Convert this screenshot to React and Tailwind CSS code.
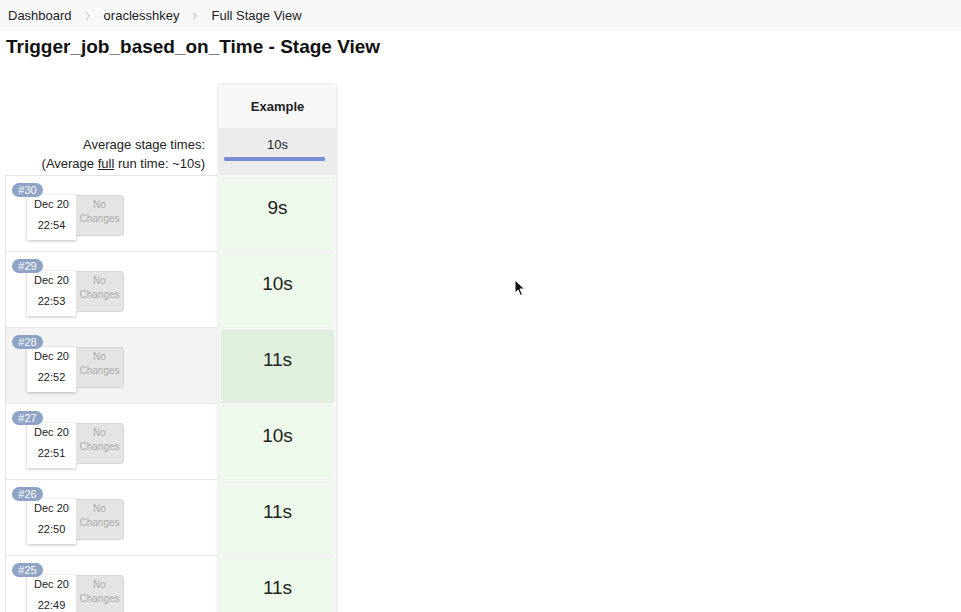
import React from "react";
import { ChevronRight } from "lucide-react";

const BUILDS = [
  { id: 30, date: "Dec 20", time: "22:54", secs: "9s" },
  { id: 29, date: "Dec 20", time: "22:53", secs: "10s" },
  { id: 28, date: "Dec 20", time: "22:52", secs: "11s", hover: true },
  { id: 27, date: "Dec 20", time: "22:51", secs: "10s" },
  { id: 26, date: "Dec 20", time: "22:50", secs: "11s" },
  { id: 25, date: "Dec 20", time: "22:49", secs: "11s" },
];

function Crumbs() {
  return (
    <div className="h-[31px] bg-[#f8f8f9] flex items-center pl-[8px] text-[13px] text-[#222]">
      <span>Dashboard</span>
      <ChevronRight size={12} className="mx-[10px] text-[#aaa]" />
      <span>oraclesshkey</span>
      <ChevronRight size={12} className="mx-[10px] text-[#aaa]" />
      <span>Full Stage View</span>
    </div>
  );
}

function BuildCell({ b }) {
  return (
    <div
      className={`h-[76px] border-t border-l border-[#e6e6e6] pl-[6px] pt-[7px] ${
        b.hover ? "bg-[#f3f3f3]" : "bg-white"
      }`}
    >
      <div className="relative z-10 w-[31px] h-[14px] rounded-full bg-[#8fa3c6] text-white text-[11px] leading-[14px] text-center">
        #{b.id}
      </div>
      <div className="flex -mt-[2px] ml-[15px]">
        <div className="w-[49px] h-[45px] bg-white shadow-[0_1px_3px_rgba(0,0,0,0.25)] flex flex-col items-center text-[11px] text-[#222] leading-[14px] pt-[2px] gap-[7px]">
          <span>{b.date}</span>
          <span>{b.time}</span>
        </div>
        <div className="w-[48px] h-[41px] bg-[#e4e4e4] border border-l-0 border-[#d6d6d6] rounded-r-[4px] flex flex-col items-center text-[10px] leading-[14px] text-[#aaa] pt-[2px]">
          <span>No</span>
          <span>Changes</span>
        </div>
      </div>
    </div>
  );
}

function StageCell({ b }) {
  return (
    <div className="h-[76px] px-[2px] pt-[2px] pb-[1px]">
      <div
        className={`h-full text-center text-[19px] text-[#222] leading-[22px] pt-[19px] shadow-[0_0_2px_rgba(0,0,0,0.12)] ${
          b.hover ? "bg-[#e0f0dc]" : "bg-[#edf9ea]"
        }`}
      >
        {b.secs}
      </div>
    </div>
  );
}

export default function App() {
  return (
    <div
      className="relative w-[961px] h-[612px] overflow-hidden bg-white"
      style={{ fontFamily: '"Liberation Sans", Arial, sans-serif' }}
    >
      <Crumbs />
      <h1 className="pl-[6px] pt-[4px] text-[19px] leading-[24px] font-bold text-[#111]">
        Trigger_job_based_on_Time - Stage View
      </h1>

      <div className="flex mt-[26px] ml-[5px]">
        {/* left: build list */}
        <div className="w-[212px]">
          <div className="h-[43px]" />
          <div className="h-[47px] pt-[7px] pr-[12px] text-right text-[13px] leading-[19px] text-[#222]">
            <div>Average stage times:</div>
            <div>
              (Average <span className="underline">full</span> run time: ~10s)
            </div>
          </div>
          <div className="border-b border-[#e6e6e6]">
            {BUILDS.map((b) => (
              <BuildCell key={b.id} b={b} />
            ))}
          </div>
        </div>

        {/* stage column */}
        <div className="w-[117px] ml-[2px] shadow-[0_0_4px_rgba(0,0,0,0.18)] bg-[#fafafa]">
          <div className="h-[43px] bg-[#f8f8f8] flex items-center justify-center text-[13px] font-bold text-[#222]">
            Example
          </div>
          <div className="h-[47px] bg-[#ececec] pl-[5px] pt-[7px] text-[13px] leading-[19px] text-[#222]">
            <div className="text-center pr-[5px]">10s</div>
            <div className="mt-[3px] w-[101px] h-[4px] bg-[#7a8fd3] rounded-[1px]" />
          </div>
          <div className="pt-[1px]">
            {BUILDS.map((b) => (
              <StageCell key={b.id} b={b} />
            ))}
          </div>
        </div>
      </div>

      {/* mouse pointer */}
      <svg
        className="absolute left-[514px] top-[279px]"
        width="12"
        height="18"
        viewBox="0 0 12 18"
      >
        <path
          d="M1 1 L1 14 L4 11 L6.5 16.5 L8.5 15.5 L6 10 L10.5 10 Z"
          fill="#111"
          stroke="#fff"
          strokeWidth="1"
          strokeLinejoin="round"
        />
      </svg>
    </div>
  );
}
